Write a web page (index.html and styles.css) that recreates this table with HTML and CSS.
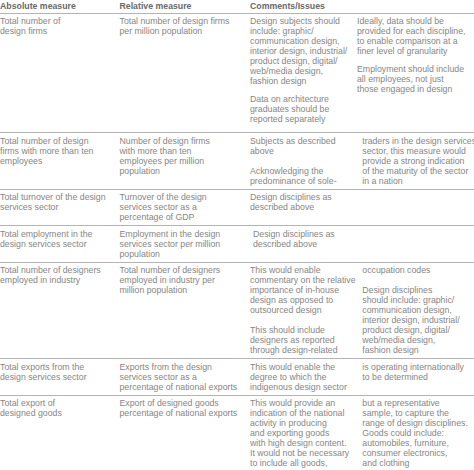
FILE: index.html
```html
<!DOCTYPE html>
<html>
<head>
<meta charset="utf-8">
<link rel="stylesheet" href="styles.css">
</head>
<body>
<div class="table">
  <div class="row head">
    <div class="cell">Absolute measure</div>
    <div class="cell">Relative measure</div>
    <div class="cell">Comments/Issues</div>
    <div class="cell"></div>
  </div>

  <div class="row first">
    <div class="cell">Total number of<br>design firms</div>
    <div class="cell">Total number of design firms<br>per million population</div>
    <div class="cell">
      <p>Design subjects should<br>include: graphic/<br>communication design,<br>interior design, industrial/<br>product design, digital/<br>web/media design,<br>fashion design</p>
      <p>Data on architecture<br>graduates should be<br>reported separately</p>
    </div>
    <div class="cell">
      <p>Ideally, data should be<br>provided for each discipline,<br>to enable comparison at a<br>finer level of granularity</p>
      <p>Employment should include<br>all employees, not just<br>those engaged in design</p>
    </div>
  </div>

  <div class="row">
    <div class="cell">Total number of design<br>firms with more than ten<br>employees</div>
    <div class="cell">Number of design firms<br>with more than ten<br>employees per million<br>population</div>
    <div class="cell">
      <p>Subjects as described<br>above</p>
      <p>Acknowledging the<br>predominance of sole-</p>
    </div>
    <div class="cell shift">traders in the design services<br>sector, this measure would<br>provide a strong indication<br>of the maturity of the sector<br>in a nation</div>
  </div>

  <div class="row">
    <div class="cell">Total turnover of the design<br>services sector</div>
    <div class="cell">Turnover of the design<br>services sector as a<br>percentage of GDP</div>
    <div class="cell">Design disciplines as<br>described above</div>
    <div class="cell shift"></div>
  </div>

  <div class="row">
    <div class="cell">Total employment in the<br>design services sector</div>
    <div class="cell">Employment in the design<br>services sector per million<br>population</div>
    <div class="cell indent">Design disciplines as<br>described above</div>
    <div class="cell shift"></div>
  </div>

  <div class="row">
    <div class="cell">Total number of designers<br>employed in industry</div>
    <div class="cell">Total number of designers<br>employed in industry per<br>million population</div>
    <div class="cell">
      <p>This would enable<br>commentary on the relative<br>importance of in-house<br>design as opposed to<br>outsourced design</p>
      <p>This should include<br>designers as reported<br>through design-related</p>
    </div>
    <div class="cell shift">
      <p>occupation codes</p>
      <p>Design disciplines<br>should include: graphic/<br>communication design,<br>interior design, industrial/<br>product design, digital/<br>web/media design,<br>fashion design</p>
    </div>
  </div>

  <div class="row">
    <div class="cell">Total exports from the<br>design services sector</div>
    <div class="cell">Exports from the design<br>services sector as a<br>percentage of national exports</div>
    <div class="cell">This would enable the<br>degree to which the<br>indigenous design sector</div>
    <div class="cell shift">is operating internationally<br>to be determined</div>
  </div>

  <div class="row">
    <div class="cell">Total export of<br>designed goods</div>
    <div class="cell">Export of designed goods<br>percentage of national exports</div>
    <div class="cell">This would provide an<br>indication of the national<br>activity in producing<br>and exporting goods<br>with high design content.<br>It would not be necessary<br>to include all goods,</div>
    <div class="cell shift">but a representative<br>sample, to capture the<br>range of design disciplines.<br>Goods could include:<br>automobiles, furniture,<br>consumer electronics,<br>and clothing</div>
  </div>
</div>
</body>
</html>
```

FILE: styles.css
```css
html, body {
  margin: 0;
  padding: 0;
  background: #ffffff;
  overflow: hidden;
}

body {
  width: 474px;
  height: 470px;
  font-family: "Liberation Sans", Arial, sans-serif;
  font-size: 8.75px;
  line-height: 10px;
  color: #868686;
}

.table {
  display: flex;
  flex-direction: column;
}

.row {
  display: grid;
  grid-template-columns: 119.5px 130.5px 107px 1fr;
  border-top: 1px solid #b4b4b4;
  padding: 2.5px 0 3px;
}

.row.head {
  border-top: none;
  padding: 1.2px 0 1.8px;
  font-weight: bold;
  color: #6a6a6a;
}

.row.first {
  padding-bottom: 8px;
}

.cell {
  white-space: nowrap;
}

.cell p {
  margin: 0;
}

.cell p + p {
  margin-top: 10px;
}

.row.first .cell p + p {
  margin-top: 8px;
}

.shift {
  padding-left: 5.3px;
}

.indent {
  padding-left: 3px;
}
```
